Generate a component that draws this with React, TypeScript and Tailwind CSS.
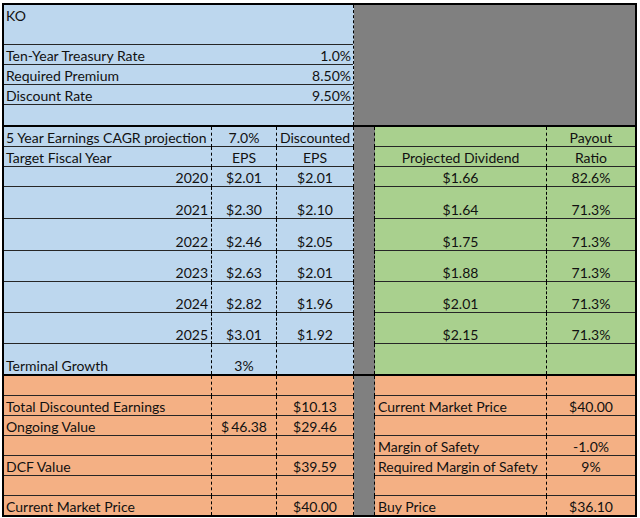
import React from "react"

// Types
type Align = "l" | "c" | "r"

type CellData = {
  t?: string
  a?: Align
  acct?: [string, string]
}

type RowData = {
  h: string
  a?: CellData
  b?: CellData
  c?: CellData
  e?: CellData
  f?: CellData
}

const rates: [string, string][] = [
  ["Ten-Year Treasury Rate", "1.0%"],
  ["Required Premium", "8.50%"],
  ["Discount Rate", "9.50%"],
]

const projection: RowData[] = [
  { h: "h-[20px]", a: { t: "5 Year Earnings CAGR projection" }, b: { t: "7.0%", a: "c" }, c: { t: "Discounted", a: "c" }, f: { t: "Payout", a: "c" } },
  { h: "h-[20px]", a: { t: "Target Fiscal Year" }, b: { t: "EPS", a: "c" }, c: { t: "EPS", a: "c" }, e: { t: "Projected Dividend", a: "c" }, f: { t: "Ratio", a: "c" } },
  { h: "h-[20px]", a: { t: "2020", a: "r" }, b: { t: "$2.01", a: "c" }, c: { t: "$2.01", a: "c" }, e: { t: "$1.66", a: "c" }, f: { t: "82.6%", a: "c" } },
  { h: "h-[32px]", a: { t: "2021", a: "r" }, b: { t: "$2.30", a: "c" }, c: { t: "$2.10", a: "c" }, e: { t: "$1.64", a: "c" }, f: { t: "71.3%", a: "c" } },
  { h: "h-[32px]", a: { t: "2022", a: "r" }, b: { t: "$2.46", a: "c" }, c: { t: "$2.05", a: "c" }, e: { t: "$1.75", a: "c" }, f: { t: "71.3%", a: "c" } },
  { h: "h-[31px]", a: { t: "2023", a: "r" }, b: { t: "$2.63", a: "c" }, c: { t: "$2.01", a: "c" }, e: { t: "$1.88", a: "c" }, f: { t: "71.3%", a: "c" } },
  { h: "h-[31px]", a: { t: "2024", a: "r" }, b: { t: "$2.82", a: "c" }, c: { t: "$1.96", a: "c" }, e: { t: "$2.01", a: "c" }, f: { t: "71.3%", a: "c" } },
  { h: "h-[31px]", a: { t: "2025", a: "r" }, b: { t: "$3.01", a: "c" }, c: { t: "$1.92", a: "c" }, e: { t: "$2.15", a: "c" }, f: { t: "71.3%", a: "c" } },
  { h: "h-[30px]", a: { t: "Terminal Growth" }, b: { t: "3%", a: "c" } },
]

const valuation: RowData[] = [
  { h: "h-[20px]" },
  { h: "h-[20px]", a: { t: "Total Discounted Earnings" }, c: { t: "$10.13", a: "c" }, e: { t: "Current Market Price" }, f: { t: "$40.00", a: "c" } },
  { h: "h-[20px]", a: { t: "Ongoing Value" }, b: { acct: ["$", "46.38"] }, c: { t: "$29.46", a: "c" } },
  { h: "h-[20px]", e: { t: "Margin of Safety" }, f: { t: "-1.0%", a: "c" } },
  { h: "h-[20px]", a: { t: "DCF Value" }, c: { t: "$39.59", a: "c" }, e: { t: "Required Margin of Safety" }, f: { t: "9%", a: "c" } },
  { h: "h-[20px]" },
  { h: "h-[19px]", a: { t: "Current Market Price" }, c: { t: "$40.00", a: "c" }, e: { t: "Buy Price" }, f: { t: "$36.10", a: "c" } },
]

function Cell({ w, bg, data, line, sep, pad }: {
  w: string
  bg: string
  data?: CellData
  line: boolean
  sep: boolean
  pad: string
}) {
  const just =
    data?.a === "c" ? "justify-center" : data?.a === "r" ? "justify-end pr-[3px]" : `justify-start ${pad}`

  return (
    <div className={`flex ${w} ${bg} ${sep ? "border-r border-dashed border-black" : ""}`}>
      <div className={`flex flex-1 items-end whitespace-nowrap pb-px leading-[15px] ${line ? "border-b border-[#262626]" : ""} ${data?.acct ? "justify-between px-[9px]" : just}`}>
        {data?.acct ? (
          <>
            <span>{data.acct[0]}</span>
            <span>{data.acct[1]}</span>
          </>
        ) : (
          data?.t
        )}
      </div>
    </div>
  )
}

function Row({ row, bgLeft, bgRight, last }: { row: RowData; bgLeft: string; bgRight: string; last: boolean }) {
  const line = !last
  return (
    <div className={`flex ${row.h}`}>
      <Cell w="w-[208px]" bg={bgLeft} data={row.a} line={line} sep pad="pl-[2px]" />
      <Cell w="w-[65px]" bg={bgLeft} data={row.b} line={line} sep pad="pl-[2px]" />
      <Cell w="w-[77px]" bg={bgLeft} data={row.c} line={line} sep pad="pl-[2px]" />
      <div className="w-[21px] bg-[#808080] border-r border-dashed border-black" />
      <Cell w="w-[172px]" bg={bgRight} data={row.e} line={line} sep pad="pl-[3px]" />
      <Cell w="w-[88px]" bg={bgRight} data={row.f} line={line} sep={false} pad="pl-[3px]" />
    </div>
  )
}

export default function App() {
  return (
    <div className="w-[640px] h-[518px] bg-white pt-[3px] pl-[2px] font-[Lato,sans-serif] text-[14px] text-[#111]">
      <div className="w-[635px] border-2 border-black">
        {/* En-tête : taux */}
        <div className="flex border-b-2 border-black">
          <div className="w-[350px] bg-[#bdd7ee] border-r border-dashed border-black">
            <div className="h-[40px] border-b border-[#262626] pl-[2px] pt-[3px] leading-[15px]">KO</div>
            {rates.map(([label, value]) => (
              <div key={label} className="flex h-[20px] items-end justify-between border-b border-[#262626] pl-[2px] pr-[2px] pb-px leading-[15px]">
                <span>{label}</span>
                <span>{value}</span>
              </div>
            ))}
            <div className="h-[20px]" />
          </div>
          <div className="flex-1 bg-[#808080]" />
        </div>

        {/* Projection */}
        <div className="border-b-2 border-black">
          {projection.map((row, i) => (
            <Row key={i} row={row} bgLeft="bg-[#bdd7ee]" bgRight="bg-[#a9d08e]" last={i === projection.length - 1} />
          ))}
        </div>

        {/* Valorisation */}
        <div>
          {valuation.map((row, i) => (
            <Row key={i} row={row} bgLeft="bg-[#f4b084]" bgRight="bg-[#f4b084]" last={i === valuation.length - 1} />
          ))}
        </div>
      </div>
    </div>
  )
}
